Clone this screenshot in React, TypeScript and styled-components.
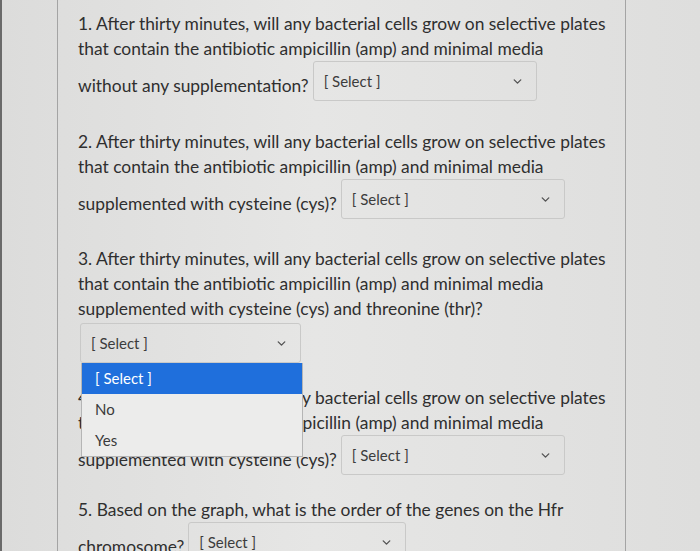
import React from 'react';
import styled, { createGlobalStyle } from 'styled-components';
import { ChevronDown } from 'lucide-react';

const GlobalStyle = createGlobalStyle`
  html, body {
    margin: 0;
    padding: 0;
    background: #e2e2e1;
  }
  body {
    font-family: Lato, "Open Sans", sans-serif;
    color: #2f2f2f;
  }
`;

const Screen = styled.div`
  width: 700px;
  height: 551px;
  overflow: hidden;
  border-left: 2px solid #6a6a6a;
  box-sizing: border-box;
  background: linear-gradient(90deg, #dcdcdb 0%, #e6e6e5 45%, #dededd 100%);
`;

const Panel = styled.div`
  margin-left: 55px;
  width: 569px;
  height: 100%;
  box-sizing: border-box;
  border-left: 1px solid #a4a4a4;
  border-right: 1px solid #a4a4a4;
  padding: 11px 0 0 20px;
`;

const Question = styled.div<{ $after: number }>`
  font-size: 17.4px;
  line-height: 25px;
  white-space: nowrap;
  margin-bottom: ${({ $after }) => $after}px;
`;

const SelectWrap = styled.span<{ $width: number; $gap: number }>`
  position: relative;
  display: inline-block;
  width: ${({ $width }) => $width}px;
  height: 40px;
  margin-left: ${({ $gap }) => $gap}px;
  vertical-align: 5px;
`;

const SelectBox = styled.span`
  display: flex;
  align-items: center;
  justify-content: space-between;
  box-sizing: border-box;
  width: 100%;
  height: 100%;
  padding: 0 12px 0 10px;
  border: 1px solid #c9c9c8;
  border-radius: 3px;
  font-size: 15px;
  line-height: 20px;
  color: #3c3c3c;
  overflow: hidden;
`;

const Menu = styled.div`
  position: absolute;
  top: 100%;
  left: 1px;
  width: 220px;
  z-index: 2;
  background: #ececeb;
  border: 1px solid #b5b5b5;
  border-top: none;
  font-size: 15px;
`;

const Option = styled.div<{ $active?: boolean }>`
  height: 31px;
  line-height: 30px;
  padding-left: 13px;
  background: ${({ $active }) => ($active ? '#1f6fdc' : 'transparent')};
  color: ${({ $active }) => ($active ? '#ffffff' : '#3a3a3a')};
`;

const BlockSelect = styled.div`
  display: flex;
  margin-top: 2px;
`;

function Select({ width, gap = 4, open }: { width: number; gap?: number; open?: boolean }) {
  return (
    <SelectWrap $width={width} $gap={gap}>
      <SelectBox>
        <span>[ Select ]</span>
        <ChevronDown size={13} strokeWidth={2.6} color="#555" />
      </SelectBox>
      {open && (
        <Menu>
          <Option $active>[ Select ]</Option>
          <Option>No</Option>
          <Option>Yes</Option>
        </Menu>
      )}
    </SelectWrap>
  );
}

export default function App() {
  return (
    <>
      <GlobalStyle />
      <Screen>
        <Panel>
          <Question $after={28}>
            1. After thirty minutes, will any bacterial cells grow on selective plates
            <br />
            that contain the antibiotic ampicillin (amp) and minimal media
            <br />
            without any supplementation?
            <Select width={224} />
          </Question>
          <Question $after={27}>
            2. After thirty minutes, will any bacterial cells grow on selective plates
            <br />
            that contain the antibiotic ampicillin (amp) and minimal media
            <br />
            supplemented with cysteine (cys)?
            <Select width={224} />
          </Question>
          <Question $after={22}>
            3. After thirty minutes, will any bacterial cells grow on selective plates
            <br />
            that contain the antibiotic ampicillin (amp) and minimal media
            <br />
            supplemented with cysteine (cys) and threonine (thr)?
            <BlockSelect>
              <Select width={221} gap={2} open />
            </BlockSelect>
          </Question>
          <Question $after={22}>
            4. After thirty minutes, will any bacterial cells grow on selective plates
            <br />
            that contain the antibiotic ampicillin (amp) and minimal media
            <br />
            supplemented with cysteine (cys)?
            <Select width={224} />
          </Question>
          <Question $after={0}>
            5. Based on the graph, what is the order of the genes on the Hfr
            <br />
            chromosome?
            <Select width={218} />
          </Question>
        </Panel>
      </Screen>
    </>
  );
}
